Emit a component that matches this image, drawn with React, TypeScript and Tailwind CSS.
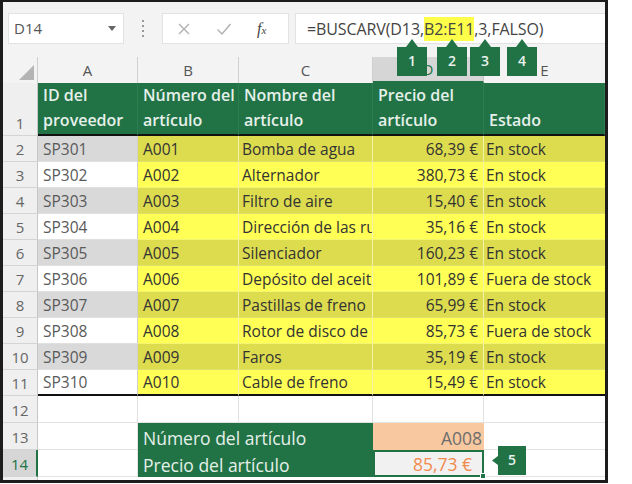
import React from "react";

const FONT = "font-['Open_Sans','Noto_Sans',sans-serif]";

const W = ["w-[35px]", "w-[100px]", "w-[101px]", "w-[134px]", "w-[111px]", "w-[121px]"];

const ROWS: string[][] = [
  ["SP301", "A001", "Bomba de agua", "68,39 €", "En stock"],
  ["SP302", "A002", "Alternador", "380,73 €", "En stock"],
  ["SP303", "A003", "Filtro de aire", "15,40 €", "En stock"],
  ["SP304", "A004", "Dirección de las ruedas", "35,16 €", "En stock"],
  ["SP305", "A005", "Silenciador", "160,23 €", "En stock"],
  ["SP306", "A006", "Depósito del aceite", "101,89 €", "Fuera de stock"],
  ["SP307", "A007", "Pastillas de freno", "65,99 €", "En stock"],
  ["SP308", "A008", "Rotor de disco de freno", "85,73 €", "Fuera de stock"],
  ["SP309", "A009", "Faros", "35,19 €", "En stock"],
  ["SP310", "A010", "Cable de freno", "15,49 €", "En stock"],
];

function RowHead({ n, h = "h-[26px]", active }: { n: string; h?: string; active?: boolean }) {
  return (
    <div
      className={`${W[0]} ${h} shrink-0 flex items-end justify-center pb-[2px] border-b border-[#d4d4d4] text-[15px] leading-[20px] ${
        active ? "bg-[#d6d6d6] border-r-2 border-r-[#217346] text-[#217346]" : "bg-[#efefef] border-r border-r-[#c6c6c6] text-[#666]"
      }`}
    >
      {n}
    </div>
  );
}

function UpBadge({ n, className }: { n: string; className: string }) {
  return (
    <div className={`absolute w-[30px] h-[37px] ${className}`}>
      <svg width="30" height="37" viewBox="0 0 30 37" className="absolute inset-0">
        <polygon points="0,8 9,8 15,0 21,8 30,8 30,37 0,37" fill="#217346" />
      </svg>
      <span className="absolute left-0 right-0 top-[12px] text-center text-[14px] leading-[20px] font-semibold text-[#e9f2ec]">{n}</span>
    </div>
  );
}

export default function App() {
  return (
    <div className={`relative w-[632px] h-[484px] bg-white ${FONT}`}>
      <div className="w-[608px] h-[483px] border-l-[3px] border-t-2 border-r-[3px] border-b-[3px] border-[#1c1c1c] bg-[#f3f3f3] flex flex-col">
        {/* formula bar */}
        <div className="h-[55px] shrink-0 flex items-start pt-[11px] pl-[5px] gap-0">
          <div className="w-[116px] h-[31px] bg-white border border-[#e2e2e2] flex items-center justify-between pl-[5px] pr-[7px]">
            <span className="text-[15px] text-[#555]">D14</span>
            <svg width="8" height="5" viewBox="0 0 8 5">
              <polygon points="0,0 8,0 4,5" fill="#666" />
            </svg>
          </div>
          <div className="w-[38px] h-[31px] flex flex-col items-center justify-center gap-[3px]">
            <span className="w-[2px] h-[2px] bg-[#999]" />
            <span className="w-[2px] h-[2px] bg-[#999]" />
            <span className="w-[2px] h-[2px] bg-[#999]" />
            <span className="w-[2px] h-[2px] bg-[#999]" />
          </div>
          <div className="w-[127px] h-[31px] bg-white border border-[#e2e2e2] flex items-center pl-[14px] gap-[25px]">
            <svg width="14" height="14" viewBox="0 0 14 14">
              <path d="M2 2 L12 12 M12 2 L2 12" stroke="#b0b0b0" strokeWidth="1.4" />
            </svg>
            <svg width="16" height="14" viewBox="0 0 16 14">
              <path d="M1.5 7.5 L6 12 L14.5 2" stroke="#b0b0b0" strokeWidth="1.4" fill="none" />
            </svg>
            <span className="font-['Liberation_Serif',serif] italic text-[16px] text-[#444] leading-none">
              f<span className="text-[11px]">x</span>
            </span>
          </div>
          <div className="ml-[6px] flex-1 h-[31px] bg-white border-l border-y border-[#e2e2e2] flex items-center pl-[11px] text-[16px] text-[#444] tracking-[-0.1px]">
            <span>=BUSCARV(D13,</span>
            <span className="bg-[#ffff4a]">B2:E11</span>
            <span>,3,FALSO)</span>
          </div>
        </div>

        {/* column headers */}
        <div className="h-[26px] shrink-0 flex text-[15px] text-[#555] leading-none">
          <div className={`${W[0]} bg-[#f3f3f3] border-r border-[#d0d0d0] flex items-end justify-end pr-[3px] pb-[3px]`}>
            <svg width="15" height="15" viewBox="0 0 15 15">
              <polygon points="15,0 15,15 0,15" fill="#b4b4b4" />
            </svg>
          </div>
          <div className={`${W[1]} border-r border-[#d0d0d0] flex items-center justify-center`}>A</div>
          <div className={`${W[2]} border-r border-[#d0d0d0] flex items-center justify-center`}>B</div>
          <div className={`${W[3]} border-r border-[#d0d0d0] flex items-center justify-center`}>C</div>
          <div className={`${W[4]} bg-[#d6d6d6] border-r border-[#c4c4c4] border-b-2 border-b-[#217346] flex items-center justify-center text-[#217346]`}>D</div>
          <div className={`${W[5]} flex items-center justify-center`}>E</div>
        </div>

        {/* header row 1 */}
        <div className="flex h-[53px] shrink-0">
          <RowHead n="1" h="h-[53px]" />
          {["ID del proveedor", "Número del artículo", "Nombre del artículo", "Precio del artículo", "Estado"].map((t, i) => {
            const parts = t.split(" ");
            const lines = i === 4 ? [t] : [parts.slice(0, -1).join(" "), parts[parts.length - 1]];
            return (
              <div
                key={t}
                className={`${W[i + 1]} bg-[#217346] border-b-2 border-b-[#111] border-r border-r-[#2d7d50] flex flex-col justify-end pl-[5px] pb-[1px] text-[16px] leading-[25px] font-semibold text-[#e6f0ea] whitespace-nowrap overflow-hidden`}
              >
                {lines.map((l) => (
                  <span key={l}>{l}</span>
                ))}
              </div>
            );
          })}
        </div>

        {/* data rows */}
        {ROWS.map((r, idx) => {
          const dark = idx % 2 === 0;
          const last = idx === ROWS.length - 1;
          const yb = dark ? "bg-[#dcdc4e]" : "bg-[#ffff55]";
          const bb = last ? "border-b-2 border-b-[#111]" : "border-b border-b-[#e4e4a0]/40";
          return (
            <div key={r[0]} className="flex h-[26px] shrink-0 text-[15.5px] leading-[20px]">
              <RowHead n={String(idx + 2)} />
              <div className={`${W[1]} ${dark ? "bg-[#d9d9d9]" : "bg-white"} ${last ? "border-b-2 border-b-[#111]" : "border-b border-b-[#e0e0e0]"} border-r border-r-[#cfcfcf] pl-[5px] flex items-end pb-[2px] text-[#5a5a5a]`}>
                {r[0]}
              </div>
              <div className={`${W[2]} ${yb} ${bb} border-r border-r-[#f2f2a8] pl-[5px] flex items-end pb-[2px] text-[#333]`}>{r[1]}</div>
              <div className={`${W[3]} ${yb} ${bb} border-r border-r-[#f2f2a8] pl-[3px] flex items-end pb-[2px] text-[#333] whitespace-nowrap overflow-hidden`}>{r[2]}</div>
              <div className={`${W[4]} ${yb} ${bb} border-r border-r-[#f2f2a8] pr-[5px] flex items-end justify-end pb-[2px] text-[#333] whitespace-nowrap`}>{r[3]}</div>
              <div className={`${W[5]} ${yb} ${bb} pl-[2px] flex items-end pb-[2px] text-[#333] whitespace-nowrap`}>{r[4]}</div>
            </div>
          );
        })}

        {/* row 12 */}
        <div className="flex h-[27px] shrink-0">
          <RowHead n="12" h="h-[27px]" />
          <div className={`${W[1]} bg-white border-b border-r border-[#e2e2e2]`} />
          <div className={`${W[2]} bg-white border-b border-r border-[#e2e2e2]`} />
          <div className={`${W[3]} bg-white border-b border-r border-[#e2e2e2]`} />
          <div className={`${W[4]} bg-white border-b border-r border-[#e2e2e2]`} />
          <div className={`${W[5]} bg-white border-b border-[#e2e2e2]`} />
        </div>

        {/* rows 13-14 */}
        <div className="flex h-[54px] shrink-0 text-[17.5px] leading-[22px]">
          <div className="flex flex-col">
            <RowHead n="13" h="h-[27px]" />
            <RowHead n="14" h="h-[27px]" active />
          </div>
          <div className={`${W[1]} flex flex-col`}>
            <div className="h-[27px] bg-white border-b border-r border-[#e2e2e2]" />
            <div className="h-[27px] bg-white border-b border-r border-[#e2e2e2]" />
          </div>
          <div className="w-[235px] bg-[#217346] flex flex-col pl-[5px] text-[#e6f0ea] whitespace-nowrap">
            <div className="h-[27px] flex items-end pb-[1px]">Número del artículo</div>
            <div className="h-[27px] flex items-end pb-[1px]">Precio del artículo</div>
          </div>
          <div className={`${W[4]} flex flex-col`}>
            <div className="h-[27px] bg-[#f8c9a0] flex items-end justify-end pr-[2px] pb-[1px] text-[#6e6e6e]">A008</div>
            <div className="relative h-[27px] bg-[#f1f1f1] border-2 border-[#217346] flex items-end justify-end pr-[10px] pb-[0px] text-[#f28a4e]">
              85,73 €
              <span className="absolute right-[-4px] bottom-[-4px] w-[6px] h-[6px] bg-[#217346] border border-white" />
            </div>
          </div>
          <div className={`${W[5]} flex flex-col`}>
            <div className="h-[27px] bg-white border-b border-[#e2e2e2]" />
            <div className="h-[27px] bg-white border-b border-[#e2e2e2]" />
          </div>
        </div>
        <div className="flex-1 flex">
          <div className={`${W[0]} bg-[#efefef] border-r border-[#c6c6c6]`} />
          <div className="flex-1 bg-white" />
        </div>
      </div>

      {/* callouts */}
      <UpBadge n="1" className="left-[397px] top-[39px]" />
      <UpBadge n="2" className="left-[437px] top-[39px]" />
      <UpBadge n="3" className="left-[470px] top-[39px]" />
      <UpBadge n="4" className="left-[507px] top-[39px]" />
      <div className="absolute left-[492px] top-[446px] w-[34px] h-[29px]">
        <svg width="34" height="29" viewBox="0 0 34 29" className="absolute inset-0">
          <polygon points="6,0 34,0 34,29 6,29 6,19 0,14.5 6,10" fill="#217346" />
        </svg>
        <span className="absolute left-[6px] right-0 top-[4px] text-center text-[14px] leading-[20px] font-semibold text-[#e9f2ec]">5</span>
      </div>
    </div>
  );
}
